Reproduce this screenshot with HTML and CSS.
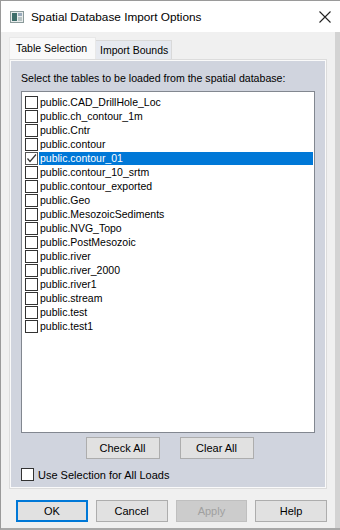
FILE: index.html
```html
<!DOCTYPE html>
<html>
<head>
<meta charset="utf-8">
<link rel="stylesheet" href="styles.css">
</head>
<body>
<div class="window">
  <div class="titlebar">
    <svg class="appicon" width="14" height="12" viewBox="0 0 14 12">
      <rect x="0.5" y="0.5" width="13" height="11" fill="#e8ecec" stroke="#8a9a9a"/>
      <rect x="2" y="2" width="5" height="8" fill="#3e6e6a"/>
      <rect x="8" y="2" width="4" height="3" fill="#9ab"/>
      <rect x="8" y="6" width="4" height="4" fill="#b8c4c4"/>
    </svg>
    <span class="title">Spatial Database Import Options</span>
    <svg class="close" width="12" height="12" viewBox="0 0 12 12">
      <path d="M0.5 0.5 L11.5 11.5 M11.5 0.5 L0.5 11.5" stroke="#222" stroke-width="1.1" fill="none"/>
    </svg>
  </div>
  <div class="body">
    <div class="tabs">
      <div class="tab active">Table Selection</div>
      <div class="tab">Import Bounds</div>
    </div>
    <div class="panel">
      <div class="panel-inner">
        <div class="label">Select the tables to be loaded from the spatial database:</div>
        <div class="listbox">
          <div class="item"><span class="cb"></span><span class="txt">public.CAD_DrillHole_Loc</span></div>
          <div class="item"><span class="cb"></span><span class="txt">public.ch_contour_1m</span></div>
          <div class="item"><span class="cb"></span><span class="txt">public.Cntr</span></div>
          <div class="item"><span class="cb"></span><span class="txt">public.contour</span></div>
          <div class="item selected"><span class="cb checked"><svg width="11" height="11" viewBox="0 0 11 11"><path d="M1.5 5.5 L4 8.5 L10 1.5" stroke="#333" stroke-width="1.2" fill="none"/></svg></span><span class="txt">public.contour_01</span></div>
          <div class="item"><span class="cb"></span><span class="txt">public.contour_10_srtm</span></div>
          <div class="item"><span class="cb"></span><span class="txt">public.contour_exported</span></div>
          <div class="item"><span class="cb"></span><span class="txt">public.Geo</span></div>
          <div class="item"><span class="cb"></span><span class="txt">public.MesozoicSediments</span></div>
          <div class="item"><span class="cb"></span><span class="txt">public.NVG_Topo</span></div>
          <div class="item"><span class="cb"></span><span class="txt">public.PostMesozoic</span></div>
          <div class="item"><span class="cb"></span><span class="txt">public.river</span></div>
          <div class="item"><span class="cb"></span><span class="txt">public.river_2000</span></div>
          <div class="item"><span class="cb"></span><span class="txt">public.river1</span></div>
          <div class="item"><span class="cb"></span><span class="txt">public.stream</span></div>
          <div class="item"><span class="cb"></span><span class="txt">public.test</span></div>
          <div class="item"><span class="cb"></span><span class="txt">public.test1</span></div>
        </div>
        <div class="btnrow">
          <button class="btn">Check All</button>
          <button class="btn">Clear All</button>
        </div>
        <div class="checkrow"><span class="cb"></span><span>Use Selection for All Loads</span></div>
      </div>
    </div>
    <div class="footer">
      <button class="btn fbtn default">OK</button>
      <button class="btn fbtn">Cancel</button>
      <button class="btn fbtn disabled">Apply</button>
      <button class="btn fbtn">Help</button>
    </div>
  </div>
</div>
</body>
</html>
```
FILE: styles.css
```css
html, body {
  margin: 0;
  padding: 0;
  background: #f0f0f0;
}
.window {
  width: 340px;
  height: 530px;
  box-sizing: border-box;
  display: flex;
  flex-direction: column;
  border-left: 1px solid #9a9a9a;
  border-top: 1px solid #9a9a9a;
  border-bottom: 2px solid #a8a8a8;
  font-family: "Liberation Sans", Arial, sans-serif;
  color: #000;
  overflow: hidden;
}
.titlebar {
  height: 31px;
  background: #fff;
  display: flex;
  align-items: center;
  padding-left: 9px;
  padding-right: 9px;
  flex: none;
}
.appicon { flex: none; margin-top: 1px; }
.title {
  margin-left: 7px;
  font-size: 11.8px;
  flex: 1;
}
.close { flex: none; }
.body {
  flex: 1;
  background: #f0f0f0;
  padding: 5px 8px 0 8px;
  display: flex;
  flex-direction: column;
  border-right: 5px solid #d3d3d3;
}
.tabs {
  display: flex;
  align-items: flex-end;
  height: 22px;
}
.tab {
  font-size: 10.5px;
  box-sizing: border-box;
  border: 1px solid #d9d9d9;
  border-bottom: none;
  background: #e6e9ef;
  height: 19px;
  line-height: 18px;
  padding: 0 4px;
  width: 77px;
  white-space: nowrap;
  overflow: hidden;
}
.tab.active {
  background: #f9f9f9;
  height: 22px;
  line-height: 20px;
  width: 87px;
  padding-left: 6px;
  border-color: #e8e8e8;
  position: relative;
  z-index: 1;
  margin-right: -1px;
}
.panel {
  background: #fafafa;
  border: 1px solid #dcdcdc;
  padding: 1px;
  height: 430px;
  box-sizing: border-box;
}
.panel-inner {
  background: #d0d4de;
  height: 100%;
  box-sizing: border-box;
  padding: 11px 10px 0 10px;
  display: flex;
  flex-direction: column;
}
.label {
  font-size: 10.6px;
  height: 19px;
  line-height: 13px;
  white-space: nowrap;
}
.listbox {
  background: #fff;
  border: 1px solid #828790;
  height: 342px;
  box-sizing: border-box;
  padding: 3px 1px 0 3px;
}
.item {
  height: 14px;
  display: flex;
  align-items: center;
  font-size: 10.5px;
}
.cb {
  width: 13px;
  height: 13px;
  box-sizing: border-box;
  border: 1px solid #333;
  background: #fff;
  flex: none;
  display: flex;
  align-items: center;
  justify-content: center;
}
.cb.checked { border-color: #555; }
.txt {
  margin-left: 1px;
  padding-left: 1px;
  height: 13px;
  line-height: 13px;
  flex: 1;
  white-space: nowrap;
}
.item.selected .txt {
  background: #0078d7;
  color: #fff;
}
.btnrow {
  display: flex;
  justify-content: center;
  gap: 20px;
  margin-top: 4px;
  padding-left: 3px;
}
.btn {
  font-family: "Liberation Sans", Arial, sans-serif;
  font-size: 11px;
  width: 74px;
  height: 22px;
  box-sizing: border-box;
  background: #e1e1e1;
  border: 1px solid #adadad;
  color: #000;
  padding: 0;
  margin: 0;
}
.checkrow {
  display: flex;
  align-items: center;
  margin-top: 9px;
  font-size: 11px;
  gap: 4px;
}
.footer {
  display: flex;
  gap: 8px;
  margin-top: 11px;
  padding-left: 7px;
}
.fbtn { width: 74px; height: 22px; }
.fbtn.default {
  border: 2px solid #0078d7;
}
.fbtn.disabled {
  background: #cccccc;
  border-color: #bfbfbf;
  color: #a0a0a0;
}
```
